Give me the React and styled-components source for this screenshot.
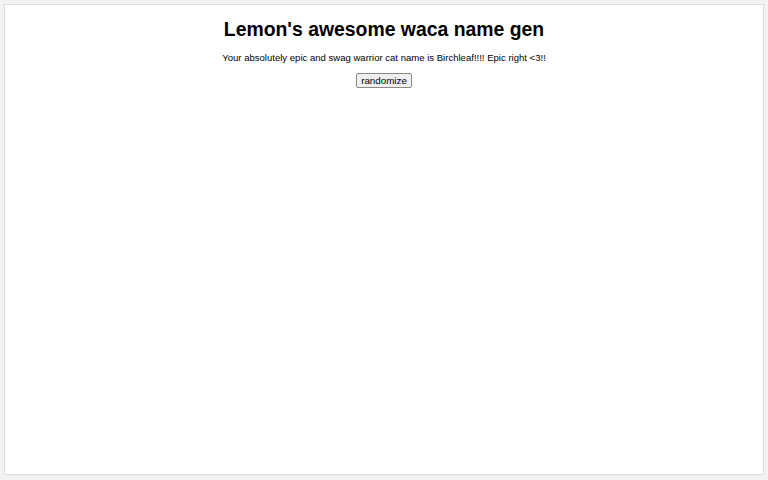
import styled, { createGlobalStyle } from "styled-components";
import { useState } from "react";

const GlobalStyle = createGlobalStyle`
    html, body {
        margin: 0;
        padding: 0;
        background: #f2f2f2;
        font-family: "Liberation Sans", Arial, sans-serif;
    }
`;

const Page = styled.div`
    height: 480px;
    padding: 4px 4px 5px 4px;
    box-sizing: border-box;
`;

const Panel = styled.main`
    height: 100%;
    box-sizing: border-box;
    background: #ffffff;
    border: 1px solid #dcdcdc;
    display: flex;
    flex-direction: column;
    align-items: center;
    padding-top: 13px;
`;

const Title = styled.h1`
    margin: 0;
    font-size: 19.4px;
    font-weight: bold;
    color: #000;
`;

const Line = styled.p`
    margin: 11px 0 0 0;
    font-size: 9.55px;
    color: #000;
`;

const Button = styled.button`
    margin-top: 10px;
    font-family: "Liberation Sans", Arial, sans-serif;
    font-size: 9.8px;
    padding: 1px 4px;
    background: #efefef;
    border: 1px solid #8a8a8a;
    border-radius: 2px;
    color: #000;
`;

const names = ["Birchleaf", "Sootpaw", "Mossheart", "Lionblaze", "Ashfur"];

const App = () => {
    const [name, setName] = useState("Birchleaf");
    return (
        <Page>
            <GlobalStyle />
            <Panel>
                <Title>Lemon's awesome waca name gen</Title>
                <Line>Your absolutely epic and swag warrior cat name is {name}!!!! Epic right &lt;3!!</Line>
                <Button onClick={() => setName(names[Math.floor(Math.random() * names.length)])}>randomize</Button>
            </Panel>
        </Page>
    );
};

export default App;
